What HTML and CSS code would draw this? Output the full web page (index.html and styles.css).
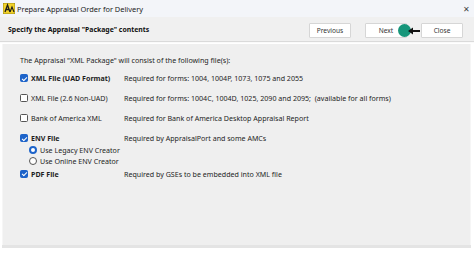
FILE: index.html
```html
<!DOCTYPE html>
<html lang="en">
<head>
    <meta charset="UTF-8">
    <title>Prepare Appraisal Order for Delivery</title>
    <link rel="stylesheet" href="styles.css">
</head>
<body>
    <div class="window">
        <div class="titlebar">
            <svg class="app-icon" width="12" height="11" viewBox="0 0 12 11">
                <rect x="0" y="0" width="12" height="11" fill="#f2d22a"/>
                <rect x="0" y="0" width="12" height="11" fill="none" stroke="#8a7a10" stroke-width="0.8"/>
                <path d="M2 9 L4.5 2 L7 9 M3 6.5 H6" fill="none" stroke="#1c1c1c" stroke-width="1.3"/>
                <path d="M7 9 L9 4 L11 9" fill="none" stroke="#1c1c1c" stroke-width="1.1"/>
            </svg>
            <span class="title">Prepare Appraisal Order for Delivery</span>
            <span class="close-x">✕</span>
        </div>

        <div class="header">
            <span class="header-text">Specify the Appraisal "Package" contents</span>
            <div class="buttons">
                <button class="btn">Previous</button>
                <div class="next-wrap">
                    <button class="btn">Next</button>
                    <span class="pointer"></span>
                    <svg class="arrow" width="12" height="8" viewBox="0 0 12 8">
                        <path d="M0 4 L5 0.5 L5 3 L12 3 L12 5 L5 5 L5 7.5 Z" fill="#111"/>
                    </svg>
                </div>
                <button class="btn">Close</button>
            </div>
        </div>

        <div class="content">
            <p class="intro">The Appraisal "XML Package" will consist of the following file(s):</p>

            <div class="files">
                <div class="row">
                    <label class="opt bold"><span class="check on"></span>XML File (UAD Format)</label>
                    <span class="desc">Required for forms: 1004, 1004P, 1073, 1075 and 2055</span>
                </div>
                <div class="row">
                    <label class="opt"><span class="check"></span>XML File (2.6 Non-UAD)</label>
                    <span class="desc">Required for forms: 1004C, 1004D, 1025, 2090 and 2095;&nbsp; (available for all forms)</span>
                </div>
                <div class="row">
                    <label class="opt"><span class="check"></span>Bank of America XML</label>
                    <span class="desc">Required for Bank of America Desktop Appraisal Report</span>
                </div>
                <div class="row">
                    <label class="opt bold"><span class="check on"></span>ENV File</label>
                    <span class="desc">Required by AppraisalPort and some AMCs</span>
                </div>
                <div class="radios">
                    <label class="radio-opt"><span class="radio on"></span>Use Legacy ENV Creator</label>
                    <label class="radio-opt"><span class="radio"></span>Use Online ENV Creator</label>
                </div>
                <div class="row pdf">
                    <label class="opt bold"><span class="check on"></span>PDF File</label>
                    <span class="desc">Required by GSEs to be embedded into XML file</span>
                </div>
            </div>
        </div>

        <div class="footer"></div>
    </div>
</body>
</html>
```

FILE: styles.css
```css
* {
    box-sizing: border-box;
}

body {
    margin: 0;
    background-color: #fff;
    font-family: "Noto Sans", "Open Sans", sans-serif;
    font-size: 7.1px;
    color: #1e1e1e;
}

.window {
    width: 474px;
    height: 258px;
    display: flex;
    flex-direction: column;
    background-color: #fff;
}

.titlebar {
    height: 17px;
    display: flex;
    align-items: center;
    padding: 0 4px 0 3px;
    background-color: #f3f5f9;
}

.app-icon {
    margin-right: 2px;
}

.title {
    font-size: 7.4px;
    color: #222;
}

.close-x {
    margin-left: auto;
    font-size: 8px;
    color: #444;
}

.header {
    height: 25px;
    display: flex;
    align-items: center;
    padding: 0 11px 0 8px;
    background-color: #f0f0f0;
    border-bottom: 1px solid #dadada;
    box-shadow: 0 1px 0 #fafafa;
}

.header-text {
    font-weight: bold;
    font-size: 6.9px;
    color: #111;
}

.buttons {
    margin-left: auto;
    display: flex;
    gap: 14px;
    margin-top: 2px;
}

.btn {
    width: 42px;
    height: 15px;
    padding: 0;
    border: 1px solid #d6d6d6;
    border-radius: 1px;
    background-color: #fff;
    font-family: inherit;
    font-size: 6.6px;
    color: #333;
}

.next-wrap {
    position: relative;
}

.pointer {
    position: absolute;
    left: 33px;
    top: 1px;
    width: 13px;
    height: 13px;
    border-radius: 50%;
    background-color: #16967a;
}

.arrow {
    position: absolute;
    left: 43px;
    top: 4px;
}

.content {
    flex: 1;
    margin: 2px 3px 0 2px;
    padding: 11px 18px 0 17px;
    background-color: #efefef;
    border-left: 1px solid #f6f6f6;
    border-right: 1px solid #f6f6f6;
}

.intro {
    margin: 0 0 3px 0;
}

.files {
    display: flex;
    flex-direction: column;
}

.row {
    display: flex;
    align-items: center;
    height: 20px;
}

.opt {
    width: 104px;
    display: flex;
    align-items: center;
}

.bold {
    font-weight: bold;
}

.check {
    width: 8px;
    height: 8px;
    margin-right: 3px;
    border: 1px solid #555;
    border-radius: 1.5px;
    background-color: #fff;
    position: relative;
}

.check.on {
    border-color: #1d63c9;
    background-color: #1d63c9;
}

.check.on::after {
    content: '';
    position: absolute;
    left: 2px;
    top: 0.5px;
    width: 2px;
    height: 4px;
    border: solid #fff;
    border-width: 0 1px 1px 0;
    transform: rotate(45deg);
}

.radios {
    display: flex;
    flex-direction: column;
    padding-left: 9px;
    margin-top: -4px;
}

.radio-opt {
    display: flex;
    align-items: center;
    height: 11.5px;
}

.radio {
    width: 8px;
    height: 8px;
    margin-right: 3px;
    border: 1px solid #555;
    border-radius: 50%;
    background-color: #fff;
}

.radio.on {
    border: 2.3px solid #1d63c9;
}

.pdf {
    margin-top: -3.5px;
}

.footer {
    height: 13px;
    margin: 0 3px 0 2px;
    border-top: 3px solid #e4e4e4;
    background-color: #fff;
}
```
